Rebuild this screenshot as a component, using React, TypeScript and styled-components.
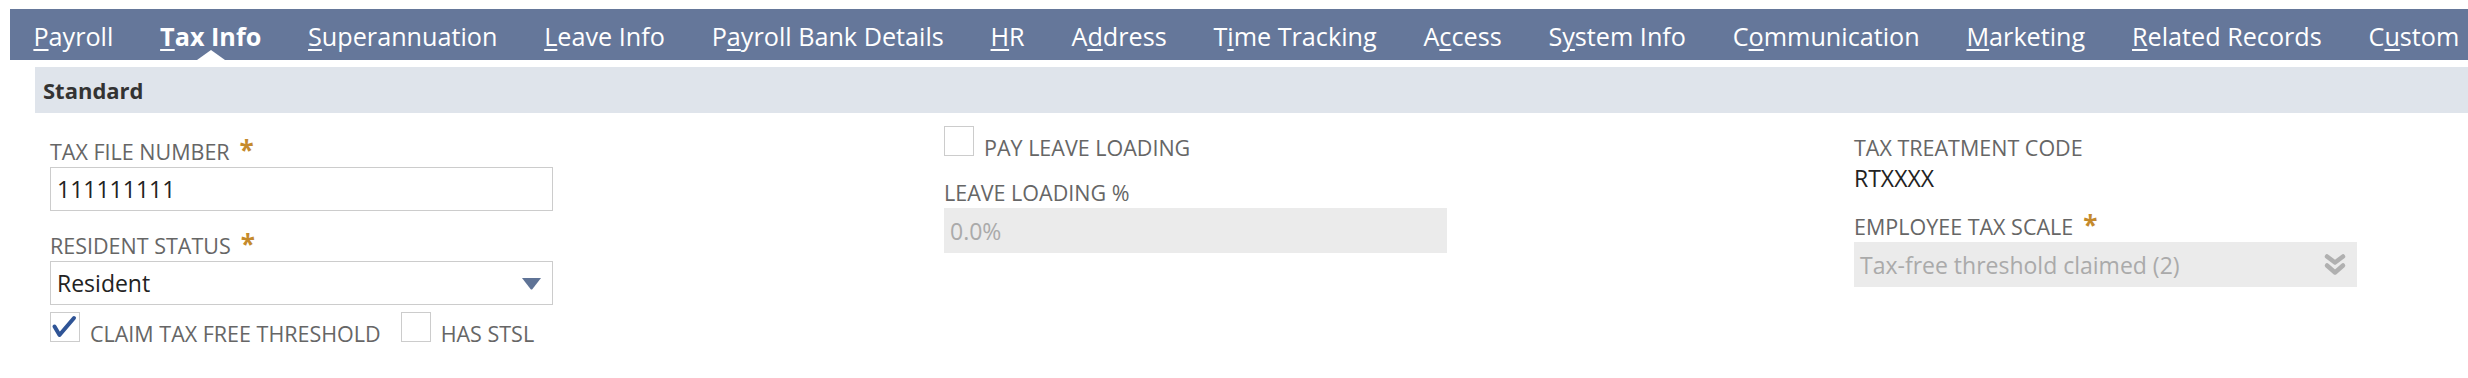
import React from "react";
import styled, { createGlobalStyle } from "styled-components";

const GlobalStyle = createGlobalStyle`
  html, body {
    margin: 0;
    padding: 0;
    background: #ffffff;
  }

  body {
    font-family: "Open Sans", "Liberation Sans", sans-serif;
    overflow: hidden;
  }
`;

interface TabDef {
  label: string;
  key: number;
}

const tabs: TabDef[] = [
  { label: "Payroll", key: 0 },
  { label: "Tax Info", key: 0 },
  { label: "Superannuation", key: 0 },
  { label: "Leave Info", key: 0 },
  { label: "Payroll Bank Details", key: 1 },
  { label: "HR", key: 0 },
  { label: "Address", key: 1 },
  { label: "Time Tracking", key: 1 },
  { label: "Access", key: 1 },
  { label: "System Info", key: 1 },
  { label: "Communication", key: 1 },
  { label: "Marketing", key: 0 },
  { label: "Related Records", key: 0 },
  { label: "Custom", key: 1 }
];

const Page = styled.div`
  padding: 9px 0 0 10px;
  width: 2458px;
`;

const TabBar = styled.nav`
  display: flex;
  height: 51px;
  background: #65779a;
  white-space: nowrap;
  overflow: hidden;
`;

const Tab = styled.div<{ $active?: boolean }>`
  position: relative;
  flex: none;
  padding: 4px 23.4px 0;
  line-height: 47px;
  font-size: 25.2px;
  font-weight: ${(p) => (p.$active ? 700 : 400)};
  color: #ffffff;

  &:after {
    content: "";
    display: ${(p) => (p.$active ? "block" : "none")};
    position: absolute;
    left: 50%;
    bottom: 0;
    margin-left: -14px;
    border-left: 14px solid transparent;
    border-right: 14px solid transparent;
    border-bottom: 10px solid #ffffff;
  }
`;

const AccessKey = styled.span`
  text-decoration: underline;
  text-underline-offset: 3px;
  text-decoration-thickness: 1.5px;
`;

const Section = styled.section`
  margin: 7px 0 0 25px;
`;

const SectionHeader = styled.h2`
  display: flex;
  align-items: center;
  height: 46px;
  margin: 0;
  padding-left: 8px;
  background: #dfe4eb;
  font-size: 22px;
  font-weight: 700;
  color: #333333;
`;

const FieldGrid = styled.div`
  display: grid;
  grid-template-columns: 894px 910px 1fr;
  padding-left: 15px;
`;

const Column = styled.div<{ $top: number }>`
  display: flex;
  flex-direction: column;
  padding-top: ${(p) => p.$top}px;
`;

const Label = styled.div<{ $gap?: number }>`
  margin-top: ${(p) => p.$gap ?? 0}px;
  font-size: 21.5px;
  line-height: 26px;
  color: #666666;
  text-transform: uppercase;
`;

const Required = styled.span`
  margin-left: 10px;
  font-size: 26px;
  font-weight: 700;
  line-height: 0;
  color: #c58a2c;
`;

const Box = styled.div<{ $disabled?: boolean }>`
  display: flex;
  align-items: center;
  box-sizing: border-box;
  width: 503px;
  height: ${(p) => (p.$disabled ? 45 : 44)}px;
  margin-top: 2px;
  padding: 0 10px 0 6px;
  border: ${(p) => (p.$disabled ? "none" : "1px solid #cccccc")};
  background: ${(p) => (p.$disabled ? "#ebebeb" : "#ffffff")};
  font-size: 23px;
  color: ${(p) => (p.$disabled ? "#aaaaaa" : "#222222")};
`;

const BoxText = styled.span`
  flex: 1;
  white-space: nowrap;
`;

const Value = styled.div`
  margin-top: 4px;
  font-size: 23px;
  line-height: 26px;
  color: #222222;
`;

const CheckRow = styled.div<{ $gap?: number }>`
  display: flex;
  align-items: baseline;
  margin-top: ${(p) => p.$gap ?? 0}px;
`;

const CheckBox = styled.div`
  flex: none;
  box-sizing: border-box;
  width: 30px;
  height: 30px;
  margin-right: 10px;
  border: 1px solid #cccccc;
  background: #ffffff;

  & svg {
    display: block;
  }
`;

const CheckLabel = styled.span`
  margin-right: 20px;
  font-size: 21.5px;
  line-height: 26px;
  color: #666666;
`;

const CheckMark = () => (
  <svg width="28" height="28" viewBox="0 0 28 28">
    <path
      d="M3.5 13.5 L8.5 22 L23 5"
      fill="none"
      stroke="#2f5496"
      strokeWidth="4"
      strokeLinecap="round"
      strokeLinejoin="round"
    />
  </svg>
);

const SelectArrow = () => (
  <svg width="21" height="13" viewBox="0 0 21 13">
    <path d="M1 1 L20 1 L11.5 12 Q10.5 13 9.5 12 Z" fill="#5f7396" />
  </svg>
);

const DoubleChevron = () => (
  <svg width="24" height="24" viewBox="0 0 24 24">
    <g
      fill="none"
      stroke="#b0b0b0"
      strokeWidth="4.5"
      strokeLinecap="round"
      strokeLinejoin="round"
    >
      <polyline points="4,3.5 12,9.5 20,3.5" />
      <polyline points="4,12.5 12,19.5 20,12.5" />
    </g>
  </svg>
);

const TabLabel: React.FC<{ tab: TabDef }> = ({ tab }) => (
  <>
    {tab.label.slice(0, tab.key)}
    <AccessKey>{tab.label.charAt(tab.key)}</AccessKey>
    {tab.label.slice(tab.key + 1)}
  </>
);

export default function App() {
  return (
    <Page>
      <GlobalStyle />
      <TabBar>
        {tabs.map((t) => (
          <Tab key={t.label} $active={t.label === "Tax Info"}>
            <TabLabel tab={t} />
          </Tab>
        ))}
      </TabBar>

      <Section>
        <SectionHeader>Standard</SectionHeader>
        <FieldGrid>
          <Column $top={26}>
            <Label>
              Tax File Number<Required>*</Required>
            </Label>
            <Box>
              <BoxText>111111111</BoxText>
            </Box>

            <Label $gap={22}>
              Resident Status<Required>*</Required>
            </Label>
            <Box>
              <BoxText>Resident</BoxText>
              <SelectArrow />
            </Box>

            <CheckRow $gap={7}>
              <CheckBox>
                <CheckMark />
              </CheckBox>
              <CheckLabel>CLAIM TAX FREE THRESHOLD</CheckLabel>
              <CheckBox />
              <CheckLabel>HAS STSL</CheckLabel>
            </CheckRow>
          </Column>

          <Column $top={13}>
            <CheckRow>
              <CheckBox />
              <CheckLabel>PAY LEAVE LOADING</CheckLabel>
            </CheckRow>
            <Label $gap={19}>Leave Loading %</Label>
            <Box $disabled>
              <BoxText>0.0%</BoxText>
            </Box>
          </Column>

          <Column $top={22}>
            <Label>Tax Treatment Code</Label>
            <Value>RTXXXX</Value>
            <Label $gap={23}>
              Employee Tax Scale<Required>*</Required>
            </Label>
            <Box $disabled>
              <BoxText>Tax-free threshold claimed (2)</BoxText>
              <DoubleChevron />
            </Box>
          </Column>
        </FieldGrid>
      </Section>
    </Page>
  );
}
